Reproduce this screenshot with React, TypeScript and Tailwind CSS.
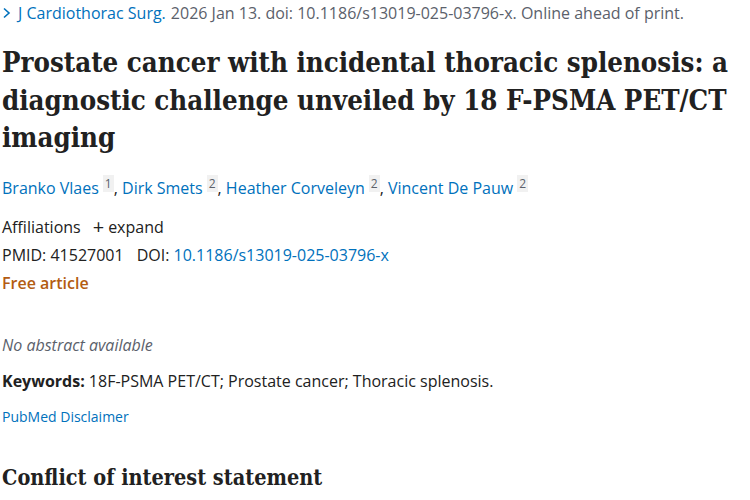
export default function App() {
  const authors = [
    { name: 'Branko Vlaes', sup: '1' },
    { name: 'Dirk Smets', sup: '2' },
    { name: 'Heather Corveleyn', sup: '2' },
    { name: 'Vincent De Pauw', sup: '2' },
  ];

  return (
    <div className="w-[750px] h-[500px] overflow-hidden bg-white text-[#212121] font-['Open_Sans',sans-serif] text-[16px] pl-[2px]">
      {/* Citation line */}
      <div className="flex items-center h-[26px] text-[#5b616b]">
        <span className="text-[#0071bc] mr-[5px] flex items-center">
          <svg width="10" height="14" viewBox="0 0 10 14" className="mr-[6px]">
            <path d="M2 2.5l5 4.5-5 4.5" fill="none" stroke="#0071bc" strokeWidth="1.6" />
          </svg>
          J Cardiothorac Surg.
        </span>
        <span>2026 Jan 13. doi: 10.1186/s13019-025-03796-x. Online ahead of print.</span>
      </div>

      {/* Title */}
      <h1 className="mt-[18px] font-['DejaVu_Serif_Condensed','DejaVu_Serif',serif] font-bold text-[27.4px] leading-[37.5px] text-[#212121]">
        Prostate cancer with incidental thoracic splenosis: a diagnostic challenge unveiled by 18 F-PSMA PET/CT imaging
      </h1>

      {/* Authors */}
      <div className="mt-[19px] text-[#0071bc]">
        {authors.map((a, i) => (
          <span key={a.name}>
            {a.name}
            <sup className="ml-1 bg-[#f1f1f1] text-[#5b616b] px-[2px] text-[12px]">{a.sup}</sup>
            {i < authors.length - 1 && <span className="text-[#212121]">, </span>}
          </span>
        ))}
      </div>

      {/* Affiliations */}
      <div className="mt-[14px] flex items-center leading-[26px]">
        <span>Affiliations</span>
        <span className="ml-3 flex items-center text-[#212121]">
          <span className="text-[20px] mr-1 leading-none">+</span>expand
        </span>
      </div>

      <div className="mt-[2px] leading-[26px]">
        <span>PMID: 41527001</span>
        <span className="ml-[13px]">DOI: </span>
        <span className="text-[#0071bc]">10.1186/s13019-025-03796-x</span>
      </div>

      <div className="mt-[2px] leading-[26px] font-semibold text-[#b35c12]">Free article</div>

      <div className="mt-[36px] italic text-[#5b616b] leading-[26px]">No abstract available</div>

      <div className="mt-[10px] leading-[26px]">
        <span className="font-bold">Keywords:</span> 18F-PSMA PET/CT; Prostate cancer; Thoracic splenosis.
      </div>

      <div className="mt-[10px] text-[14px] text-[#0071bc] leading-[26px]">PubMed Disclaimer</div>

      <h2 className="mt-[33px] font-['DejaVu_Serif_Condensed','DejaVu_Serif',serif] font-bold text-[21.5px] leading-[30px]">
        Conflict of interest statement
      </h2>
    </div>
  );
}
